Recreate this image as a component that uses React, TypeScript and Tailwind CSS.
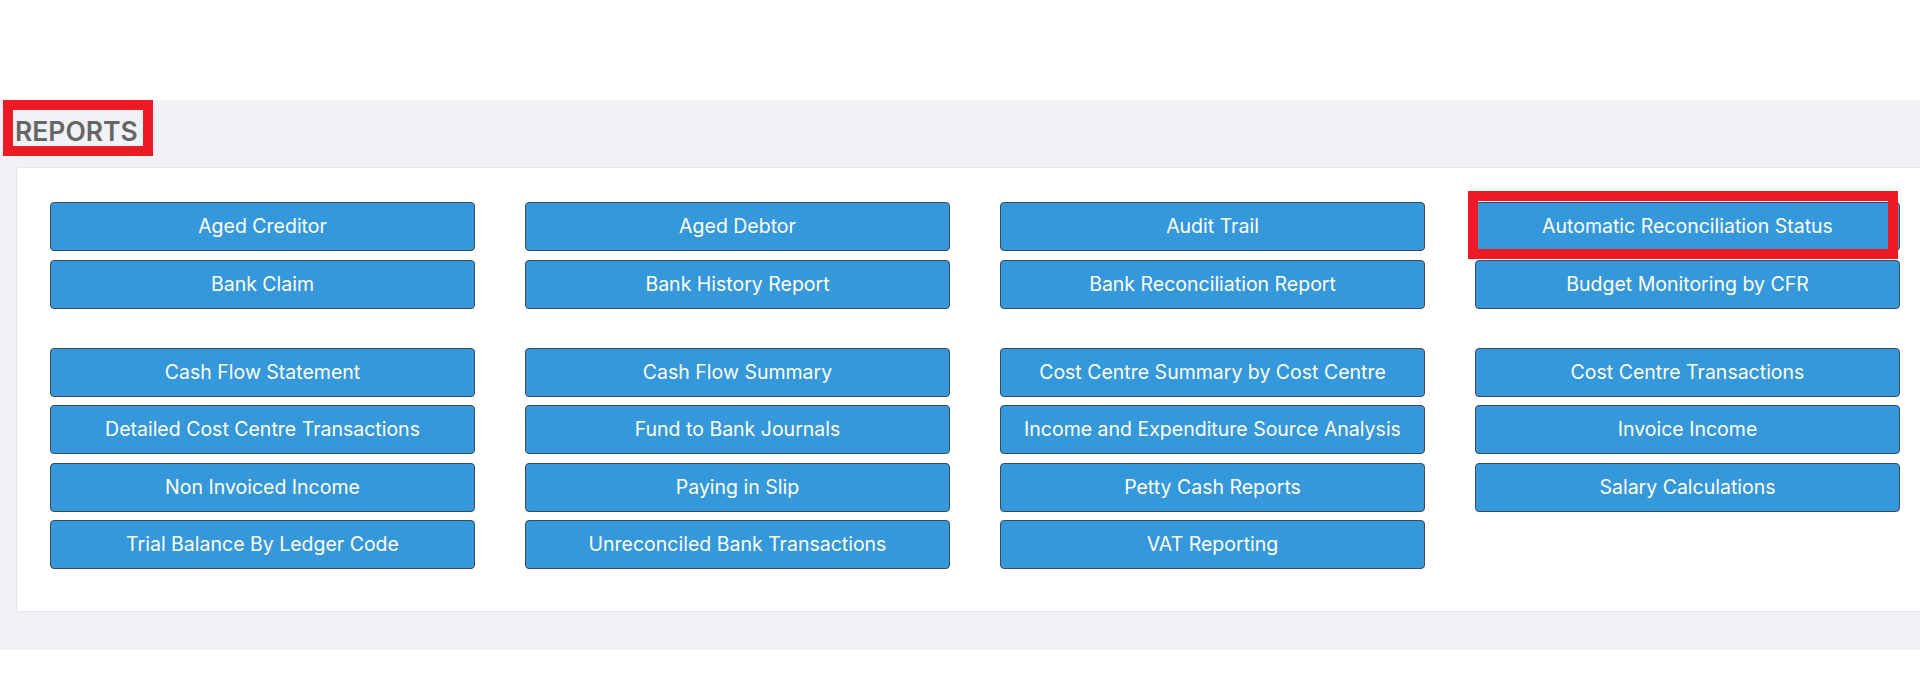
import React from "react";

type Report = {
  label: string;
  highlight?: boolean;
};

const mainReports: Report[] = [
  { label: "Aged Creditor" },
  { label: "Aged Debtor" },
  { label: "Audit Trail" },
  { label: "Automatic Reconciliation Status", highlight: true },
  { label: "Bank Claim" },
  { label: "Bank History Report" },
  { label: "Bank Reconciliation Report" },
  { label: "Budget Monitoring by CFR" },
];

const otherReports: Report[] = [
  { label: "Cash Flow Statement" },
  { label: "Cash Flow Summary" },
  { label: "Cost Centre Summary by Cost Centre" },
  { label: "Cost Centre Transactions" },
  { label: "Detailed Cost Centre Transactions" },
  { label: "Fund to Bank Journals" },
  { label: "Income and Expenditure Source Analysis" },
  { label: "Invoice Income" },
  { label: "Non Invoiced Income" },
  { label: "Paying in Slip" },
  { label: "Petty Cash Reports" },
  { label: "Salary Calculations" },
  { label: "Trial Balance By Ledger Code" },
  { label: "Unreconciled Bank Transactions" },
  { label: "VAT Reporting" },
];

function ReportButton({ report }: { report: Report }) {
  return (
    <button
      type="button"
      className="relative flex h-[49px] w-[425px] items-center justify-center rounded-[4px] border border-[#3c4b5c] bg-[#3498db] pt-[1px] text-[19.5px] text-white"
    >
      {report.label}
      {report.highlight && (
        <span className="pointer-events-none absolute -top-[12px] -bottom-[9px] -left-[8px] right-[1px] border-[10px] border-[#ed1c24]" />
      )}
    </button>
  );
}

function ReportGrid({ reports }: { reports: Report[] }) {
  return (
    <div className="grid grid-cols-[repeat(4,425px)] gap-x-[50px] gap-y-[8.5px]">
      {reports.map((r) => (
        <ReportButton key={r.label} report={r} />
      ))}
    </div>
  );
}

export default function App() {
  return (
    <div
      className="min-h-[693px] w-full overflow-hidden bg-white pt-[100px]"
      style={{ fontFamily: "Inter, 'Noto Sans', sans-serif" }}
    >
      <div className="bg-[#f1f2f6] pb-[38px]">
        <h2 className="ml-[3px] w-[150px] border-[10px] border-[#ed1c24] pl-[2px] pt-[8px] pb-[2px] text-[26.5px] font-semibold leading-[26px] text-[#666666]">
          REPORTS
        </h2>
        <div className="ml-[16px] mt-[11px] w-max rounded-[4px] border border-[#e3e5e9] bg-white px-[33px] pt-[34px] pb-[42px]">
          <ReportGrid reports={mainReports} />
          <div className="mt-[39px]">
            <ReportGrid reports={otherReports} />
          </div>
        </div>
      </div>
    </div>
  );
}
